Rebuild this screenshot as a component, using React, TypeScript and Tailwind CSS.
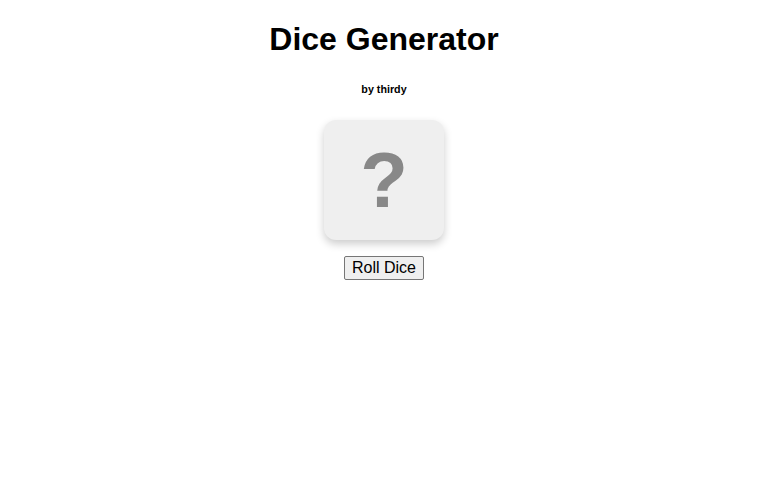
export default function App() {
  return (
    <div className="min-h-[480px] w-full bg-white flex flex-col items-center text-black" style={{ fontFamily: '"Liberation Sans", Arial, sans-serif' }}>
      <h1 className="mt-[21px] text-[32px] leading-[37px] font-bold">Dice Generator</h1>
      <h6 className="mt-[25px] text-[10.72px] leading-[12px] font-bold">by thirdy</h6>
      <div className="mt-[25px] w-[120px] h-[120px] rounded-[12px] bg-[#efefef] shadow-[0_4px_8px_rgba(0,0,0,0.2)] flex items-center justify-center">
        <span className="text-[78px] leading-none font-bold text-[#888888]">?</span>
      </div>
      <button className="mt-[16px] h-[24px] px-[7px] border border-[#767676] rounded-[2px] bg-[#efefef] text-[16px] leading-[18px] text-black">
        Roll Dice
      </button>
    </div>
  );
}
